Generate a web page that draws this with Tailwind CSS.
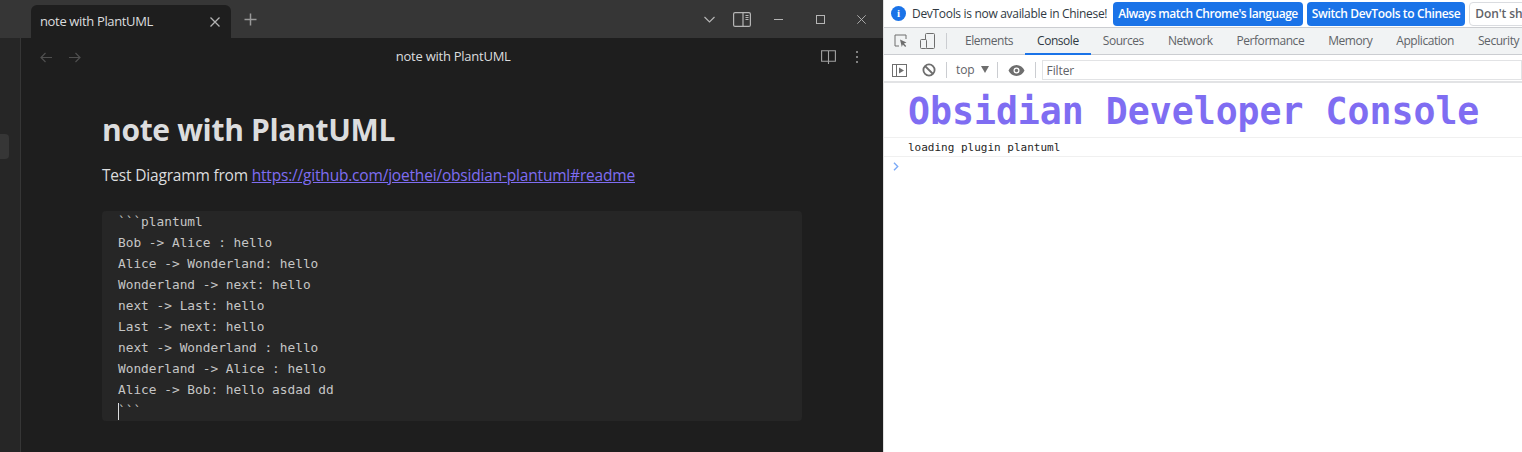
<!DOCTYPE html>
<html lang="en">
<head>
<meta charset="UTF-8">
<title>note with PlantUML</title>
<script src="https://cdn.jsdelivr.net/npm/@tailwindcss/browser@4"></script>
</head>
<body class="w-[1522px] h-[452px] overflow-hidden flex bg-white font-['Open_Sans',sans-serif]">
  <!-- obsidian window -->
  <div class="w-[883px] h-full flex flex-col bg-[#1e1e1e] shrink-0">
    <!-- title bar -->
    <header class="h-[38px] bg-[#363636] flex items-end shrink-0 relative">
      <div class="ml-[31px] w-[200px] h-[33px] bg-[#1e1e1e] rounded-t-md flex items-center justify-between pl-[9px] pr-[10px] text-[#dcddde] text-[13px]">
        <span class="font-['Open_Sans'] tracking-[-0.35px]">note with PlantUML</span>
        <svg class="w-3 h-3 text-[#b3b3b3]" viewBox="0 0 12 12" fill="none" stroke="currentColor" stroke-width="1.3"><path d="M1.5 1.5l9 9M10.5 1.5l-9 9"/></svg>
      </div>
      <div class="ml-[13px] mb-[12px]">
        <svg class="w-[13px] h-[13px] text-[#999]" viewBox="0 0 13 13" fill="none" stroke="currentColor" stroke-width="1.5"><path d="M6.5 0.5v12M0.5 6.5h12"/></svg>
      </div>
      <div class="flex-1"></div>
      <div class="flex items-center h-[38px] text-[#b5b5b5]">
        <svg class="w-[11px] h-[7px] mr-[18px]" viewBox="0 0 11 7" fill="none" stroke="currentColor" stroke-width="1.2"><path d="M0.5 1l5 5 5-5"/></svg>
        <svg class="w-[18px] h-[15px] mr-[23px]" viewBox="0 0 18 15" fill="none" stroke="currentColor" stroke-width="1.2"><rect x="0.6" y="0.6" width="16.8" height="13.8" rx="1.5"/><path d="M10 0.6v13.8M12.5 3.5h3M12.5 5.5h3M12.5 7.5h3"/></svg>
        <div class="w-[9px] h-px bg-[#b5b5b5] mr-[33px]"></div>
        <div class="w-[9px] h-[9px] border border-[#b5b5b5] mr-[32px]"></div>
        <svg class="w-[9px] h-[9px] mr-[17px]" viewBox="0 0 9 9" fill="none" stroke="currentColor" stroke-width="0.9"><path d="M0.3 0.3l8.4 8.4M8.7 0.3l-8.4 8.4"/></svg>
      </div>
    </header>
    <div class="flex-1 flex min-h-0">
      <!-- collapsed sidebar -->
      <aside class="w-[21px] shrink-0 bg-[#262626] border-r border-[#363636] relative">
        <div class="absolute left-0 top-[96px] w-[9px] h-[25px] bg-[#363636] rounded-r"></div>
      </aside>
      <main class="flex-1 flex flex-col min-w-0">
        <!-- view header -->
        <div class="h-[38px] flex items-center pl-[19px] pr-[25px] shrink-0">
          <svg class="w-[13px] h-[11px] text-[#4f4f4f]" viewBox="0 0 13 11" fill="none" stroke="currentColor" stroke-width="1.2"><path d="M12 5.5H1M5.5 1L1 5.5 5.5 10"/></svg>
          <svg class="w-[13px] h-[11px] ml-[15px] text-[#4f4f4f]" viewBox="0 0 13 11" fill="none" stroke="currentColor" stroke-width="1.2"><path d="M1 5.5h11M7.5 1L12 5.5 7.5 10"/></svg>
          <div class="flex-1 text-center text-[#dcddde] text-[13px] tracking-[-0.25px] pl-[5px]">note with PlantUML</div>
          <svg class="w-[15px] h-[14px] text-[#a3a3a3]" viewBox="0 0 15 14" fill="none" stroke="currentColor" stroke-width="1.1"><path d="M0.6 0.8h6.9v10.4H0.6zM7.5 0.8h6.900v10.400H7.500zM7.500 11v3"/></svg>
          <div class="ml-[20px] flex flex-col gap-[2.5px]">
            <div class="w-[2.5px] h-[2.5px] rounded-full bg-[#a3a3a3]"></div>
            <div class="w-[2.5px] h-[2.5px] rounded-full bg-[#a3a3a3]"></div>
            <div class="w-[2.5px] h-[2.5px] rounded-full bg-[#a3a3a3]"></div>
          </div>
        </div>
        <!-- note -->
        <article class="pl-[81px] w-[781px] pt-[34px]">
          <h1 class="text-[30px] leading-[40px] font-bold text-[#dcddde] tracking-[-0.32px] font-['Open_Sans']">note with PlantUML</h1>
          <p class="mt-[13px] text-[15.5px] leading-[24px] text-[#dcddde] tracking-[-0.19px]">Test Diagramm from <a class="text-[#7f6df2] underline">https://github.com/joethei/obsidian-plantuml#readme</a></p>
          <pre class="mt-[24px] h-[210px] bg-[#262626] rounded pl-[16px] text-[#c5c5c5] font-['DejaVu_Sans_Mono',monospace] text-[12.8px] leading-[21px] relative">```plantuml
Bob -&gt; Alice : hello
Alice -&gt; Wonderland: hello
Wonderland -&gt; next: hello
next -&gt; Last: hello
Last -&gt; next: hello
next -&gt; Wonderland : hello
Wonderland -&gt; Alice : hello
Alice -&gt; Bob: hello asdad dd
```<span class="absolute left-[15.5px] top-[192px] w-px h-[17px] bg-[#dcddde]"></span></pre>
        </article>
      </main>
    </div>
  </div>
  <!-- devtools -->
  <section class="flex-1 min-w-0 h-full flex flex-col bg-white border-l border-[#e0e0e0] overflow-hidden font-['Open_Sans',sans-serif]">
    <!-- infobar -->
    <div class="h-[28px] flex items-center pl-[7px] border-b border-[#cbcdd1] whitespace-nowrap text-[12px] shrink-0">
      <div class="w-[15px] h-[15px] rounded-full bg-[#1a73e8] text-white flex items-center justify-center text-[11px] font-bold font-['Liberation_Serif',serif] shrink-0">i</div>
      <span class="ml-[6px] text-[#303942] tracking-[-0.31px]">DevTools is now available in Chinese!</span>
      <span class="ml-[6px] h-[24px] leading-[23px] px-[5px] bg-[#1a73e8] text-white font-semibold rounded tracking-[-0.48px]">Always match Chrome's language</span>
      <span class="ml-[4px] h-[24px] leading-[23px] px-[5px] bg-[#1a73e8] text-white font-semibold rounded tracking-[-0.37px]">Switch DevTools to Chinese</span>
      <span class="ml-[4px] h-[24px] leading-[22px] px-[5px] bg-white text-[#5f6368] border border-[#dadce0] rounded font-semibold tracking-[-0.1px]">Don't show again</span>
    </div>
    <!-- tabs -->
    <div class="h-[27px] bg-[#f1f3f4] border-b border-[#cbcdd1] flex items-stretch text-[12px] text-[#5f6368] whitespace-nowrap shrink-0 tracking-[-0.45px]">
      <div class="flex items-center pl-[10px]">
        <svg class="w-[14px] h-[14px] text-[#6e6e6e]" viewBox="0 0 14 14" fill="none"><path d="M5 12H1V1h11v4" stroke="currentColor" stroke-width="1"/><path d="M6 5.500l6.500 3-2.600 1 2.300 2.600-1 1-2.400-2.600-1 2.400z" fill="currentColor"/></svg>
        <svg class="w-[15px] h-[16px] ml-[12px] text-[#6e6e6e]" viewBox="0 0 15 16" fill="none" stroke="currentColor" stroke-width="1"><rect x="5.500" y="0.500" width="9" height="15" rx="1"/><rect x="0.500" y="6.500" width="6" height="9" rx="1" fill="#f1f3f4"/></svg>
        <div class="w-px h-[16px] bg-[#cbcdd1] ml-[11px]"></div>
      </div>
      <div class="ml-[6px] px-[12px] flex items-center">Elements</div>
      <div class="px-[12px] flex items-center text-[#303942] border-b-2 border-[#1a73e8] h-[27px]">Console</div>
      <div class="px-[12px] flex items-center">Sources</div>
      <div class="px-[12px] flex items-center">Network</div>
      <div class="px-[12px] flex items-center">Performance</div>
      <div class="px-[12px] flex items-center">Memory</div>
      <div class="px-[12px] flex items-center">Application</div>
      <div class="px-[12px] flex items-center">Security</div>
    </div>
    <!-- console toolbar -->
    <div class="h-[28px] pt-[4px] border-b-2 border-[#e2e3e5] flex items-center pl-[8px] text-[12px] text-[#5f6368] shrink-0">
      <svg class="w-[15px] h-[13px] text-[#6e6e6e]" viewBox="0 0 15 13" fill="none"><rect x="0.500" y="0.500" width="14" height="12" stroke="currentColor"/><path d="M4.500 0.500v12" stroke="currentColor"/><path d="M7 3.500l5 3-5 3z" fill="currentColor"/></svg>
      <svg class="w-[14px] h-[14px] ml-[15px] text-[#6e6e6e]" viewBox="0 0 14 14" fill="none" stroke="currentColor" stroke-width="1.800"><circle cx="7" cy="7" r="5.600"/><path d="M3 3l8 8"/></svg>
      <div class="w-px h-[16px] bg-[#cbcdd1] ml-[10px]"></div>
      <span class="ml-[9px] tracking-[-0.1px]">top</span>
      <div class="ml-[6px] w-0 h-0 border-x-[4px] border-x-transparent border-t-[7px] border-t-[#6e6e6e] mb-[2px]"></div>
      <div class="w-px h-[16px] bg-[#cbcdd1] ml-[8px]"></div>
      <svg class="w-[17px] h-[11px] ml-[10px] text-[#6e6e6e]" viewBox="0 0 17 11"><path fill-rule="evenodd" d="M8.500 0C5 0 2 2.200 0.500 5.500 2 8.800 5 11 8.500 11s6.500-2.200 8-5.500C15 2.200 12 0 8.500 0zm0 8.500a3 3 0 110-6 3 3 0 010 6z" fill="currentColor"/><circle cx="8.500" cy="5.500" r="1.700" fill="currentColor"/></svg>
      <div class="w-px h-[16px] bg-[#cbcdd1] ml-[10px]"></div>
      <div class="ml-[6px] flex-1 h-[20px] border border-[#e2e3e5] pl-[4px] leading-[19px] tracking-[-0.1px]">Filter</div>
    </div>
    <!-- console output -->
    <div class="h-[55px] pl-[24px] border-b border-[#f0f0f0] text-[#7f6df2] font-['DejaVu_Sans_Mono',monospace] font-bold text-[36.5px] leading-[58px] whitespace-nowrap shrink-0">Obsidian Developer Console</div>
    <div class="h-[19px] pl-[24px] border-b border-[#f0f0f0] text-[#1f1f1f] font-['DejaVu_Sans_Mono',monospace] text-[11px] leading-[19px] whitespace-nowrap shrink-0">loading plugin plantuml</div>
    <div class="pl-[9px] pt-[5px]">
      <svg class="w-[6px] h-[9px] text-[#7baaf7]" viewBox="0 0 6 9" fill="none" stroke="currentColor" stroke-width="1.400"><path d="M1 0.800l3.700 3.700L1 8.200"/></svg>
    </div>
  </section>
</body>
</html>
